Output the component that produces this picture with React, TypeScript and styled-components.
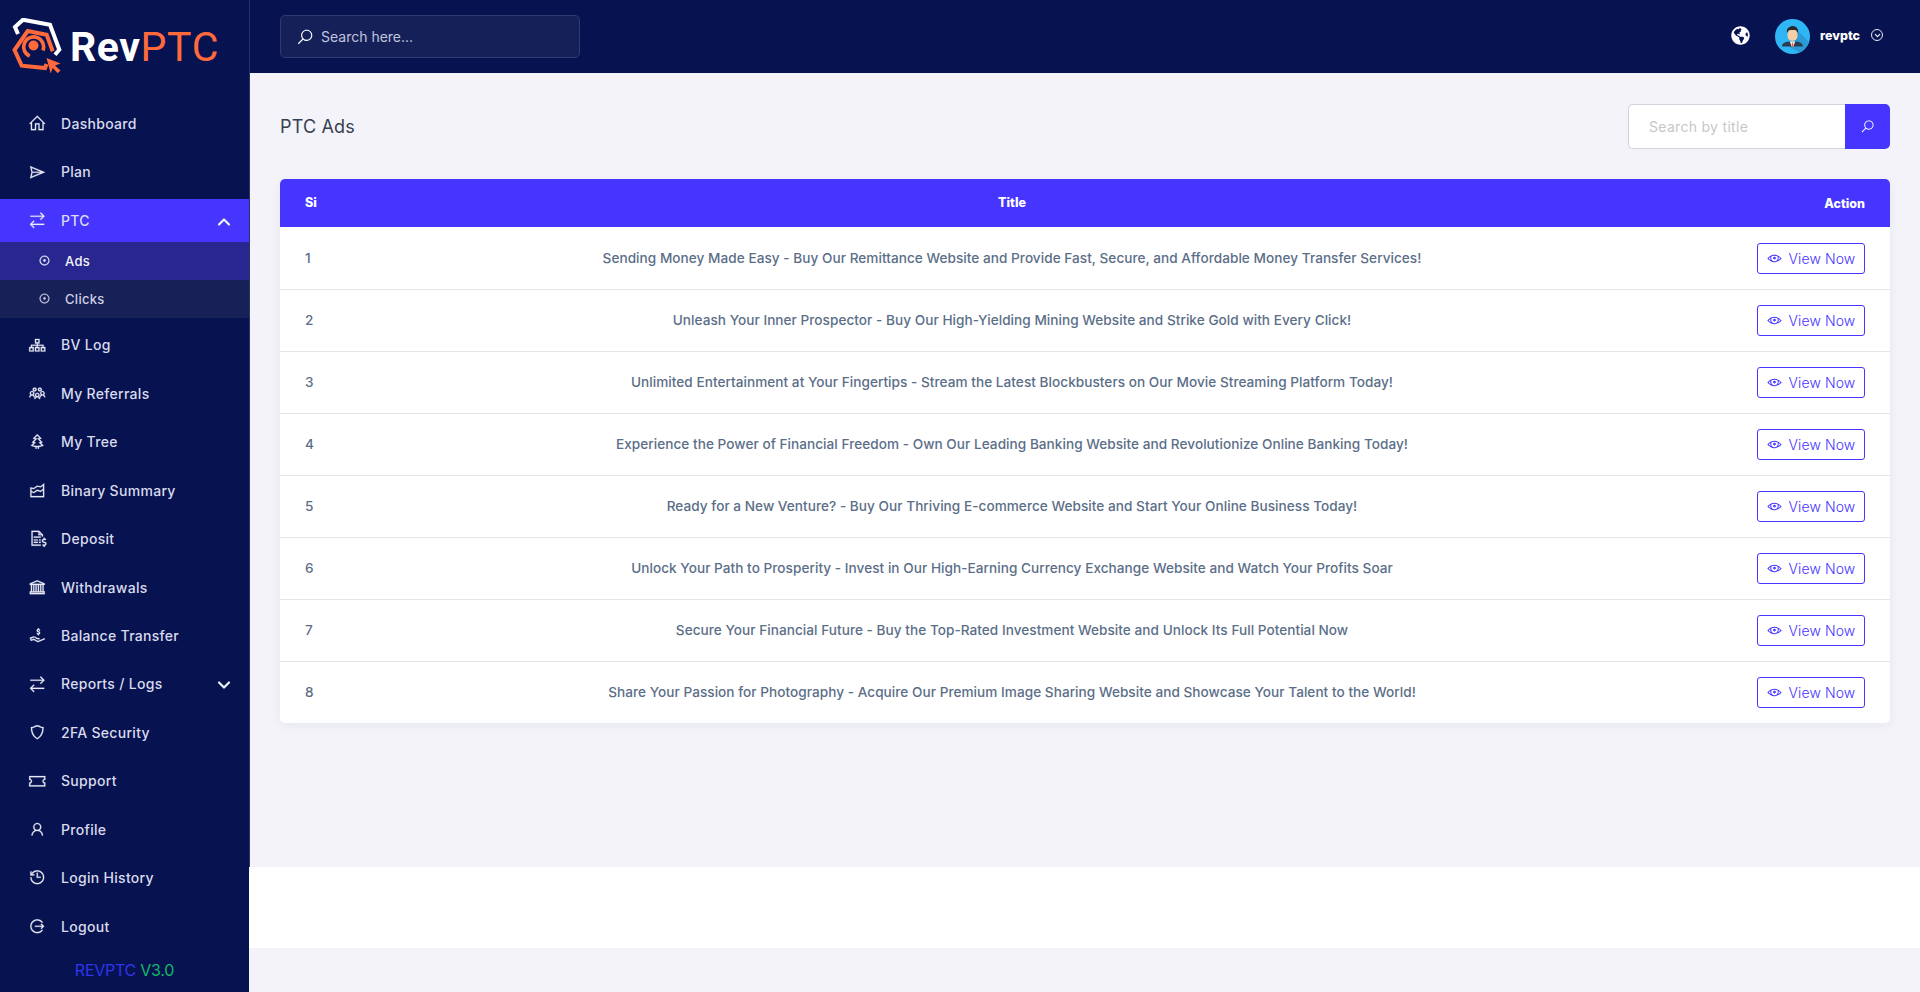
import React from "react";
import styled, { createGlobalStyle } from "styled-components";
import {
  LiaHomeSolid, LiaPaperPlane, LiaExchangeAltSolid, LiaSitemapSolid, LiaUsersSolid, LiaTreeSolid,
  LiaChartAreaSolid, LiaFileInvoiceDollarSolid, LiaLandmarkSolid, LiaHandHoldingUsdSolid,
  LiaShieldAltSolid, LiaTicketAltSolid, LiaUser, LiaHistorySolid, LiaSignOutAltSolid,
  LiaSearchSolid, LiaEye, LiaDotCircle,
} from "react-icons/lia";
import { FaGlobeAmericas } from "react-icons/fa";
import { FiChevronDown, FiChevronUp } from "react-icons/fi";

const Global = createGlobalStyle`
  html, body { margin: 0; padding: 0; height: 100%; background: #f3f3f9; }
  body { font-family: Inter, "Noto Sans", sans-serif; overflow: hidden; }
  * { box-sizing: border-box; }
`;

const Shell = styled.div`display: flex; height: 992px; width: 1920px;`;

const Sidebar = styled.aside`
  width: 249px; flex: none; background: #071251; display: flex; flex-direction: column;
  height: 992px;
`;
const LogoBar = styled.div`height: 73px; display: flex; align-items: center; padding: 18px 0 0 10px; gap: 8px;`;
const LogoText = styled.div`
  font-family: Roboto, sans-serif; font-weight: 700; font-size: 41px; letter-spacing: 0.5px; color: #fff;
  line-height: 1; margin-top: 3px; span { color: #ff6a3d; font-weight: 400; letter-spacing: 0.8px; }
`;
const Menu = styled.nav`padding-top: 29px; flex: 1;`;
const Item = styled.div`margin-bottom: 5.45px;`;
const ItemLink = styled.div<{ $active?: boolean }>`
  height: 43px; display: flex; align-items: center; padding-left: 28px; padding-right: 15px;
  background: ${(p) => (p.$active ? "#4634ff" : "transparent")};
  color: #d9dbec; font-size: 14px; font-weight: 500; letter-spacing: 0.3px;
`;
const ItemIcon = styled.span`
  width: 33px; flex: none; display: flex; align-items: center; font-size: 18.5px; color: #e8eaf5;
  svg { stroke: currentColor; stroke-width: 0.4px; }
`;
const ItemLabel = styled.span`flex: 1; white-space: nowrap;`;
const Caret = styled.span`display: flex; font-size: 20px; color: #f0f1f8; margin-top: 3px; svg { stroke-width: 2.6; }`;
const SubItem = styled.div<{ $active?: boolean }>`
  height: 38px; display: flex; align-items: center; padding-left: 38px;
  background: ${(p) => (p.$active ? "#27278f" : "#172057")};
  color: ${(p) => (p.$active ? "#f3f3fb" : "#cfd2e6")}; font-size: 13px; font-weight: 500; letter-spacing: 0.3px;
`;
const SubIcon = styled.span`width: 27px; display: flex; font-size: 13px; svg { stroke: currentColor; stroke-width: 0.6px; }`;
const Version = styled.div`
  text-align: center; font-size: 16px; line-height: 20px; padding-bottom: 12px; color: #2f35e8;
  letter-spacing: -0.25px; span { color: #12b864; }
`;

const Main = styled.div`flex: 1; min-width: 0; display: flex; flex-direction: column;`;
const TopBar = styled.header`
  height: 73px; background: #071251; border-left: 1px solid #2b3468; display: flex; align-items: center;
  padding: 0 30px 0 30px; flex: none;
`;
const TopSearch = styled.div`
  width: 300px; height: 43px; background: #152058; border: 1px solid #2f3a6e; border-radius: 5px;
  display: flex; align-items: center; padding-left: 15px; gap: 7px; color: #c0c4dc; font-size: 14px;
  svg { color: #fff; font-size: 18px; }
`;
const TopRight = styled.div`margin-left: auto; display: flex; align-items: center; color: #fff;`;
const GlobeWrap = styled.span`display: flex; font-size: 19px; margin-right: 25px; margin-top: -2px;`;
const Avatar = styled.svg`width: 35px; height: 35px; margin-right: 10px; display: block;`;
const UserName = styled.span`font-size: 12.5px; font-weight: 800; margin-right: 11px; margin-top: -2px;`;
const UserCaret = styled.span`
  width: 12px; height: 12px; border: 1px solid #e7e8f3; border-radius: 50%; display: flex; align-items: center;
  justify-content: center; font-size: 9px; margin-right: 7px; margin-top: -3px; svg { stroke-width: 3; }
`;

const Body = styled.main`
  height: 794px; padding: 31px 30px 0 30px; flex: none; border-left: 1px solid #2b3468;
`;
const HeadRow = styled.div`display: flex; align-items: center; justify-content: space-between; height: 45px;`;
const PageTitle = styled.h1`margin: 0; font-size: 18px; font-weight: 400; color: #34404f; letter-spacing: 0.15px;`;
const TitleSearch = styled.div`display: flex; width: 262px; height: 45px;`;
const TitleInput = styled.div`
  flex: 1; background: #fff; border: 1px solid #ced4da; border-right: none; border-radius: 5px 0 0 5px;
  display: flex; align-items: center; padding-left: 20px; color: #c7c7c7; font-size: 14px; letter-spacing: 0.3px;
`;
const TitleButton = styled.div`
  width: 45px; background: #4634ff; border-radius: 0 5px 5px 0; color: #fff; display: flex;
  align-items: center; justify-content: center; font-size: 15px;
`;

const Card = styled.div`
  margin-top: 30px; border-radius: 5px; background: #fff; box-shadow: 0 3px 12px rgba(20, 20, 60, 0.05);
`;
const Row = styled.div<{ $head?: boolean }>`
  display: grid; grid-template-columns: 60px 1fr 206px; align-items: center;
  height: ${(p) => (p.$head ? "48px" : "62px")};
  background: ${(p) => (p.$head ? "#4634ff" : "transparent")};
  border-radius: ${(p) => (p.$head ? "5px 5px 0 0" : "0")};
  color: ${(p) => (p.$head ? "#fff" : "#5b6e88")};
  font-size: ${(p) => (p.$head ? "12.5px" : "13.6px")};
  font-weight: ${(p) => (p.$head ? 800 : 450)};
  letter-spacing: ${(p) => (p.$head ? "0" : "0.04px")};
  & + & { border-top: 1px solid #e5e5e5; }
  &:nth-child(2) { border-top: none; }
`;
const SiCell = styled.div`padding: 0 0 1px 25px;`;
const TitleCell = styled.div`text-align: center; white-space: nowrap; padding-bottom: 1px;`;
const ActionCell = styled.div`display: flex; justify-content: flex-end; padding-right: 25px;`;
const ViewButton = styled.div`
  width: 108px; height: 31px; border: 1px solid #4634ff; border-radius: 3px; color: #4634ff; background: #fff;
  display: flex; align-items: center; justify-content: center; gap: 7px; font-size: 14px; font-weight: 300; letter-spacing: 0.1px;
  svg { font-size: 15px; }
`;
const Footer = styled.footer`height: 81px; background: #fff; flex: none;`;

const rows = [
  "Sending Money Made Easy - Buy Our Remittance Website and Provide Fast, Secure, and Affordable Money Transfer Services!",
  "Unleash Your Inner Prospector - Buy Our High-Yielding Mining Website and Strike Gold with Every Click!",
  "Unlimited Entertainment at Your Fingertips - Stream the Latest Blockbusters on Our Movie Streaming Platform Today!",
  "Experience the Power of Financial Freedom - Own Our Leading Banking Website and Revolutionize Online Banking Today!",
  "Ready for a New Venture? - Buy Our Thriving E-commerce Website and Start Your Online Business Today!",
  "Unlock Your Path to Prosperity - Invest in Our High-Earning Currency Exchange Website and Watch Your Profits Soar",
  "Secure Your Financial Future - Buy the Top-Rated Investment Website and Unlock Its Full Potential Now",
  "Share Your Passion for Photography - Acquire Our Premium Image Sharing Website and Showcase Your Talent to the World!",
];

const LogoMark = () => (
  <svg width="52" height="55" viewBox="10 20 52 55" fill="none" style={{ flex: "none" }}>
    <path d="M18 36l-3-7 8-7.300 27 5 9.300 25-4.300 5" stroke="#fff" strokeWidth="4" />
    <path d="M46.500 66l-1.500 4-23.300-2.300L14.500 52 27.700 33l19 3.700 6 16.600" stroke="#ff6a3d" strokeWidth="4" />
    <path d="M43 52.500a10 10 0 1 0-13.500 5.500l-4-3" stroke="#ff6a3d" strokeWidth="3.600" />
    <circle cx="33.500" cy="47.500" r="5" fill="#ff6a3d" />
    <path d="M46.500 60l14 5.500-5.500 2 5.500 5-2.800 2.700-5-5.200-2 5.500z" fill="#ff6a3d" />
  </svg>
);

const top = [
  { icon: <LiaHomeSolid />, label: "Dashboard" },
  { icon: <LiaPaperPlane />, label: "Plan" },
];
const rest = [
  { icon: <LiaSitemapSolid />, label: "BV Log" },
  { icon: <LiaUsersSolid />, label: "My Referrals" },
  { icon: <LiaTreeSolid />, label: "My Tree" },
  { icon: <LiaChartAreaSolid />, label: "Binary Summary" },
  { icon: <LiaFileInvoiceDollarSolid />, label: "Deposit" },
  { icon: <LiaLandmarkSolid />, label: "Withdrawals" },
  { icon: <LiaHandHoldingUsdSolid />, label: "Balance Transfer" },
  { icon: <LiaExchangeAltSolid />, label: "Reports / Logs", caret: true },
  { icon: <LiaShieldAltSolid />, label: "2FA Security" },
  { icon: <LiaTicketAltSolid />, label: "Support" },
  { icon: <LiaUser />, label: "Profile" },
  { icon: <LiaHistorySolid />, label: "Login History" },
  { icon: <LiaSignOutAltSolid />, label: "Logout" },
];

export default function App() {
  return (
    <>
      <Global />
      <Shell>
        <Sidebar>
          <LogoBar>
            <LogoMark />
            <LogoText>Rev<span>PTC</span></LogoText>
          </LogoBar>
          <Menu>
            {top.map((m) => (
              <Item key={m.label}>
                <ItemLink><ItemIcon>{m.icon}</ItemIcon><ItemLabel>{m.label}</ItemLabel></ItemLink>
              </Item>
            ))}
            <Item>
              <ItemLink $active>
                <ItemIcon><LiaExchangeAltSolid /></ItemIcon>
                <ItemLabel>PTC</ItemLabel>
                <Caret><FiChevronUp /></Caret>
              </ItemLink>
              <SubItem $active><SubIcon><LiaDotCircle /></SubIcon>Ads</SubItem>
              <SubItem><SubIcon><LiaDotCircle /></SubIcon>Clicks</SubItem>
            </Item>
            {rest.map((m) => (
              <Item key={m.label}>
                <ItemLink>
                  <ItemIcon>{m.icon}</ItemIcon>
                  <ItemLabel>{m.label}</ItemLabel>
                  {m.caret && <Caret><FiChevronDown /></Caret>}
                </ItemLink>
              </Item>
            ))}
          </Menu>
          <Version>REVPTC <span>V3.0</span></Version>
        </Sidebar>
        <Main>
          <TopBar>
            <TopSearch><LiaSearchSolid />Search here...</TopSearch>
            <TopRight>
              <GlobeWrap><FaGlobeAmericas /></GlobeWrap>
              <Avatar viewBox="0 0 35 35">
                <circle cx="17.500" cy="17.500" r="17.500" fill="#2fb6f5" />
                <path d="M22 11l12 12a17.500 17.500 0 0 1-9 10.500L12 27z" fill="#2a9bd6" />
                <path d="M7 27.500c0-3 2.500-4 5.500-5l5 1 5-1c3 1 5.500 2 5.500 5z" fill="#2c3e50" />
                <path d="M15 22.500h5l-1.500 5h-2z" fill="#fff" />
                <path d="M17 23.500h1l.7 4h-2.400z" fill="#e8584a" />
                <rect x="12.500" y="10" width="10" height="12" rx="5" fill="#f6cda9" />
                <path d="M12 14c-1-5 3-7 6-7s6 3 5 7c-1-2-2-3-3-3h-5c-1 0-2 1-3 3z" fill="#2a2a2a" />
              </Avatar>
              <UserName>revptc</UserName>
              <UserCaret><FiChevronDown /></UserCaret>
            </TopRight>
          </TopBar>
          <Body>
            <HeadRow>
              <PageTitle>PTC Ads</PageTitle>
              <TitleSearch>
                <TitleInput>Search by title</TitleInput>
                <TitleButton><LiaSearchSolid /></TitleButton>
              </TitleSearch>
            </HeadRow>
            <Card>
              <Row $head>
                <SiCell>Si</SiCell>
                <TitleCell>Title</TitleCell>
                <ActionCell>Action</ActionCell>
              </Row>
              {rows.map((t, i) => (
                <Row key={t}>
                  <SiCell>{i + 1}</SiCell>
                  <TitleCell>{t}</TitleCell>
                  <ActionCell><ViewButton><LiaEye />View Now</ViewButton></ActionCell>
                </Row>
              ))}
            </Card>
          </Body>
          <Footer />
        </Main>
      </Shell>
    </>
  );
}
